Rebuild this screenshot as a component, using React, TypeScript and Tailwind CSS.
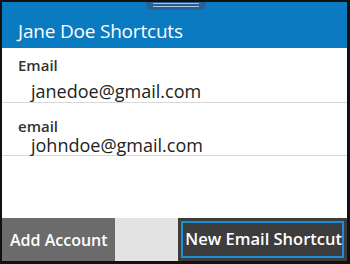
export default function App() {
  const items = [
    { label: "Email", value: "janedoe@gmail.com" },
    { label: "email", value: "johndoe@gmail.com" },
  ]

  return (
    <div className="w-[350px] h-[264px] bg-[#111] pl-[2px] pt-[2px] pr-[3px] pb-[3px] font-['Open_Sans',sans-serif]">
      <div className="relative flex flex-col h-full bg-white overflow-hidden">
        {/* handle */}
        <div className="absolute left-[144px] top-[-2px] w-[60px] h-[10px] rounded-b-[6px] bg-[#2a5f95] flex flex-col items-center justify-center gap-[2px]">
          <div className="w-[46px] h-[1px] bg-[#aac4e0]" />
          <div className="w-[46px] h-[1px] bg-[#aac4e0]" />
        </div>

        <div className="h-[46px] bg-[#0a7bc1] flex items-end pb-[7px] pl-[16px] text-white text-[19px] leading-none tracking-[-0.2px]">
          Jane Doe Shortcuts
        </div>

        <div className="flex-1">
          <div className="h-[55px] border-b border-[#d8d8d8] pl-[16px] pt-[8px]">
            <div className="text-[15px] leading-[18px] font-semibold text-[#333]">{items[0].label}</div>
            <div className="pl-[13px] pt-[7px] text-[18px] leading-[20px] text-[#222]">{items[0].value}</div>
          </div>
          <div className="h-[53px] border-b border-[#d8d8d8] pl-[16px] pt-[15px]">
            <div className="text-[15px] leading-[17px] font-semibold text-[#333]">{items[1].label}</div>
            <div className="pl-[13px] text-[18px] leading-[20px] text-[#222]">{items[1].value}</div>
          </div>
        </div>

        <div className="h-[43px] flex">
          <div className="w-[114px] bg-[#6b6b6b] flex items-center pl-[8px] text-white text-[16px] font-semibold">
            Add Account
          </div>
          <div className="w-[64px] bg-[#e3e3e3]" />
          <div className="flex-1 bg-[#3d3d3d] p-[3px]">
            <div className="h-full border-[2px] border-[#1b8fd6] flex items-center pl-[2px] text-white text-[16.5px] font-semibold whitespace-nowrap">
              New Email Shortcut
            </div>
          </div>
        </div>
      </div>
    </div>
  )
}
